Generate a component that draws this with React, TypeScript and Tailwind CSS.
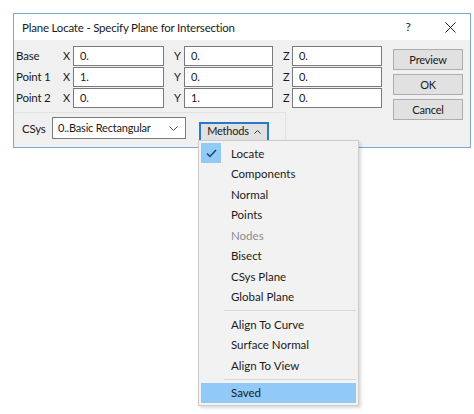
import React from 'react';

const font = { fontFamily: 'Lato, "Noto Sans", sans-serif' };

const rows = [
  { label: 'Base', x: '0.', y: '0.', z: '0.' },
  { label: 'Point 1', x: '1.', y: '0.', z: '0.' },
  { label: 'Point 2', x: '0.', y: '1.', z: '0.' },
];

const methods = [
  ['Locate', 'Components', 'Normal', 'Points', 'Nodes', 'Bisect', 'CSys Plane', 'Global Plane'],
  ['Align To Curve', 'Surface Normal', 'Align To View'],
  ['Saved'],
];

const Field: React.FC<{ value: string; w: string }> = ({ value, w }) => (
  <div className={`${w} shrink-0 h-[20px] border border-[#7a7a7a] bg-white pl-[6px] leading-[18px] text-[#1a1a1a]`}>{value}</div>
);

const Btn: React.FC<{ children: React.ReactNode }> = ({ children }) => (
  <div className="w-[70px] h-[21px] border border-[#adadad] bg-[#e1e1e1] text-center leading-[19px] text-[#1a1a1a]">
    {children}
  </div>
);

export default function App() {
  return (
    <div className="relative w-[474px] h-[414px] bg-white text-[11px] tracking-[-0.2px] whitespace-nowrap" style={font}>
      <div className="absolute left-[13px] top-[13px] w-[458px] h-[135px] border border-[#7aa7d6] bg-[#f0f0f0] flex flex-col text-[#1a1a1a]">
        <div className="h-[28px] bg-white flex items-center pl-[8px]">
          <span className="flex-1 text-[11.5px] mt-[1px]">Plane Locate - Specify Plane for Intersection</span>
          <span className="w-[20px] text-center text-[12px]">?</span>
          <svg className="ml-[27px] mr-[14px]" width="11" height="11" viewBox="0 0 11 11">
            <path d="M0.5 0.5 L10.5 10.5 M10.5 0.5 L0.5 10.5" stroke="#222" strokeWidth="1" />
          </svg>
        </div>
        <div className="flex flex-1">
          <div className="flex flex-col w-[368px] shrink-0">
            <div className="flex flex-col gap-[1px] pt-[6px] pl-[2px]">
              {rows.map((r) => (
                <div key={r.label} className="flex items-center h-[20px]">
                  <span className="w-[47px] shrink-0 text-[11.5px]">{r.label}</span>
                  <span className="w-[10px] shrink-0">X</span>
                  <Field value={r.x} w="w-[91px]" />
                  <span className="w-[20px] shrink-0 pl-[10px]">Y</span>
                  <Field value={r.y} w="w-[89px]" />
                  <span className="w-[19px] shrink-0 pl-[10px]">Z</span>
                  <Field value={r.z} w="w-[90px]" />
                </div>
              ))}
            </div>
            <div className="mt-[4px] ml-[1px] w-[271px] h-[35px] border-t border-r border-[#e2e2e2] flex items-center">
              <span className="ml-[7px] w-[30px] -mt-[2px] text-[11.5px]">CSys</span>
              <div className="w-[134px] h-[22px] -mt-[4px] border border-[#7a7a7a] bg-white flex items-center pl-[5px]">
                <span className="flex-1">0..Basic Rectangular</span>
                <svg className="mr-[7px]" width="9" height="5" viewBox="0 0 9 5">
                  <path d="M0.5 0.5 L4.5 4.5 L8.5 0.5" fill="none" stroke="#555" strokeWidth="1" />
                </svg>
              </div>
              <div className="ml-[13px] mt-[3px] w-[70px] h-[20px] border-2 border-[#2b79c9] bg-[#e1e1e1] flex items-center justify-center gap-[5px]">
                <span>Methods</span>
                <svg width="7" height="4" viewBox="0 0 7 4">
                  <path d="M0.5 3.5 L3.5 0.5 L6.5 3.5" fill="none" stroke="#333" strokeWidth="1" />
                </svg>
              </div>
            </div>
          </div>
          <div className="ml-[11px] pt-[9px] flex flex-col gap-[4px]">
            <Btn>Preview</Btn>
            <Btn>OK</Btn>
            <Btn>Cancel</Btn>
          </div>
        </div>
      </div>

      <div className="absolute left-[198px] top-[140px] w-[161px] border border-[#cccccc] bg-[#f2f2f2] p-[2px] shadow-[2px_2px_3px_rgba(0,0,0,0.15)] text-[11.5px] tracking-normal text-[#1a1a1a]">
        {methods.map((group, gi) => (
          <div key={gi}>
            {gi > 0 && <div className="ml-[23px] my-[3px] h-[1px] bg-[#d7d7d7]" />}
            {group.map((m) => (
              <div
                key={m}
                className={`flex items-center h-[20.5px] ${m === 'Saved' ? 'bg-[#91c9f7]' : ''} ${m === 'Nodes' ? 'text-[#8c8c8c]' : ''}`}
              >
                <div className={`w-[20px] h-[20px] flex items-center justify-center ${m === 'Locate' ? 'bg-[#91c9f7]' : ''}`}>
                  {m === 'Locate' && (
                    <svg width="11" height="9" viewBox="0 0 11 9">
                      <path d="M1 4.5 L4 7.5 L10 1" fill="none" stroke="#1f3f66" strokeWidth="1.4" />
                    </svg>
                  )}
                </div>
                <span className="ml-[10px]">{m}</span>
              </div>
            ))}
          </div>
        ))}
      </div>
    </div>
  );
}
